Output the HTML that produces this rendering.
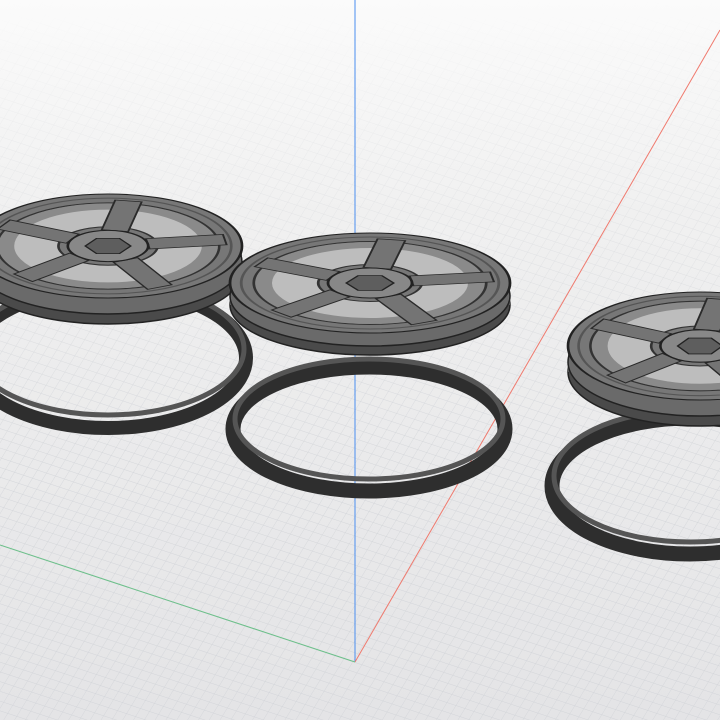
<!DOCTYPE html>
<html><head><meta charset="utf-8"><style>
html,body{margin:0;padding:0;width:720px;height:720px;overflow:hidden;background:#eee}
</style></head><body>
<svg width="720" height="720" viewBox="0 0 720 720" xmlns="http://www.w3.org/2000/svg">
<defs>
<linearGradient id="bg" x1="0" y1="0" x2="0" y2="1">
<stop offset="0" stop-color="#fbfbfb"/><stop offset="0.3" stop-color="#f0f0f0"/><stop offset="1" stop-color="#e4e4e6"/>
</linearGradient>
<pattern id="grid" width="9" height="9" patternUnits="userSpaceOnUse" patternTransform="matrix(1 0.33 -0.55 0.9 0 0)">
<path d="M0 0H9M0 0V9" stroke="#cdd0d5" stroke-width="0.6" fill="none"/>
</pattern>
<linearGradient id="fade" x1="0" y1="0" x2="0" y2="1">
<stop offset="0" stop-color="#fff" stop-opacity="0"/><stop offset="0.3" stop-color="#fff" stop-opacity="0.5"/><stop offset="0.65" stop-color="#fff" stop-opacity="1"/><stop offset="1" stop-color="#fff" stop-opacity="1"/>
</linearGradient>
<mask id="m"><rect width="720" height="720" fill="url(#fade)"/></mask>
<g id="wheel">
<circle r="100" fill="#777" stroke="#222" stroke-width="2"/>
<circle r="92" fill="none" stroke="#555" stroke-width="2"/>
<circle r="60" fill="none" stroke="#bdbdbd" stroke-width="46"/>
<circle r="76" fill="none" stroke="#8a8a8a" stroke-width="12"/>
<circle r="83" fill="none" stroke="#333" stroke-width="2"/>
<circle r="37" fill="none" stroke="#333" stroke-width="2"/>
<g fill="#747474" stroke="#2a2a2a" stroke-width="1.5">
<rect x="-10" y="-88" width="20" height="58" transform="rotate(10)"/>
<rect x="-10" y="-88" width="20" height="58" transform="rotate(82)"/>
<rect x="-10" y="-88" width="20" height="58" transform="rotate(154)"/>
<rect x="-10" y="-88" width="20" height="58" transform="rotate(226)"/>
<rect x="-10" y="-88" width="20" height="58" transform="rotate(298)"/>
</g>
<circle r="30" fill="#888" stroke="#222" stroke-width="2"/>
<polygon points="17,0 8.5,14.7 -8.5,14.7 -17,0 -8.5,-14.7 8.5,-14.7" fill="#5e5e5e" stroke="#222" stroke-width="1.5"/>
</g>
</defs>
<rect width="720" height="720" fill="url(#bg)"/>
<rect width="720" height="720" fill="url(#grid)" mask="url(#m)"/>
<line x1="355" y1="0" x2="355" y2="662" stroke="#4a8ef0" stroke-width="1"/>
<line x1="355" y1="662" x2="720" y2="30" stroke="#f07a6e" stroke-width="1"/>
<line x1="0" y1="545" x2="355" y2="662" stroke="#6cc08a" stroke-width="1"/>

<g>
<ellipse cx="108" cy="358" rx="138" ry="70" fill="none" stroke="#2e2e2e" stroke-width="14"/>
<ellipse cx="108" cy="349" rx="136" ry="66" fill="none" stroke="#555" stroke-width="5"/>
<ellipse cx="108" cy="272" rx="134" ry="52" fill="#4a4a4a" stroke="#222" stroke-width="1.5"/>
<rect x="-26" y="248" width="268" height="24" fill="#5a5a5a"/>
<ellipse cx="108" cy="262" rx="134" ry="52" fill="#6a6a6a" stroke="#222" stroke-width="1.5"/>
<g transform="translate(108,246) scale(1.34,0.52)"><use href="#wheel"/></g>
</g>
<g>
<ellipse cx="369" cy="429" rx="136" ry="62" fill="none" stroke="#2e2e2e" stroke-width="15"/>
<ellipse cx="369" cy="419" rx="134" ry="60" fill="none" stroke="#555" stroke-width="5"/>
<ellipse cx="370" cy="305" rx="140" ry="50" fill="#4a4a4a" stroke="#222" stroke-width="1.5"/>
<rect x="230" y="283" width="280" height="22" fill="#5a5a5a"/>
<ellipse cx="370" cy="296" rx="140" ry="50" fill="#6a6a6a" stroke="#222" stroke-width="1.5"/>
<g transform="translate(370,283) scale(1.40,0.50)"><use href="#wheel"/></g>
</g>
<g>
<ellipse cx="690" cy="486" rx="138" ry="68" fill="none" stroke="#2e2e2e" stroke-width="15"/>
<ellipse cx="690" cy="476" rx="136" ry="66" fill="none" stroke="#555" stroke-width="5"/>
<ellipse cx="700" cy="372" rx="132" ry="54" fill="#4a4a4a" stroke="#222" stroke-width="1.5"/>
<rect x="568" y="346" width="264" height="26" fill="#5a5a5a"/>
<ellipse cx="700" cy="362" rx="132" ry="54" fill="#6a6a6a" stroke="#222" stroke-width="1.5"/>
<g transform="translate(700,346) scale(1.32,0.54)"><use href="#wheel"/></g>
</g>
</svg>
</body></html>
